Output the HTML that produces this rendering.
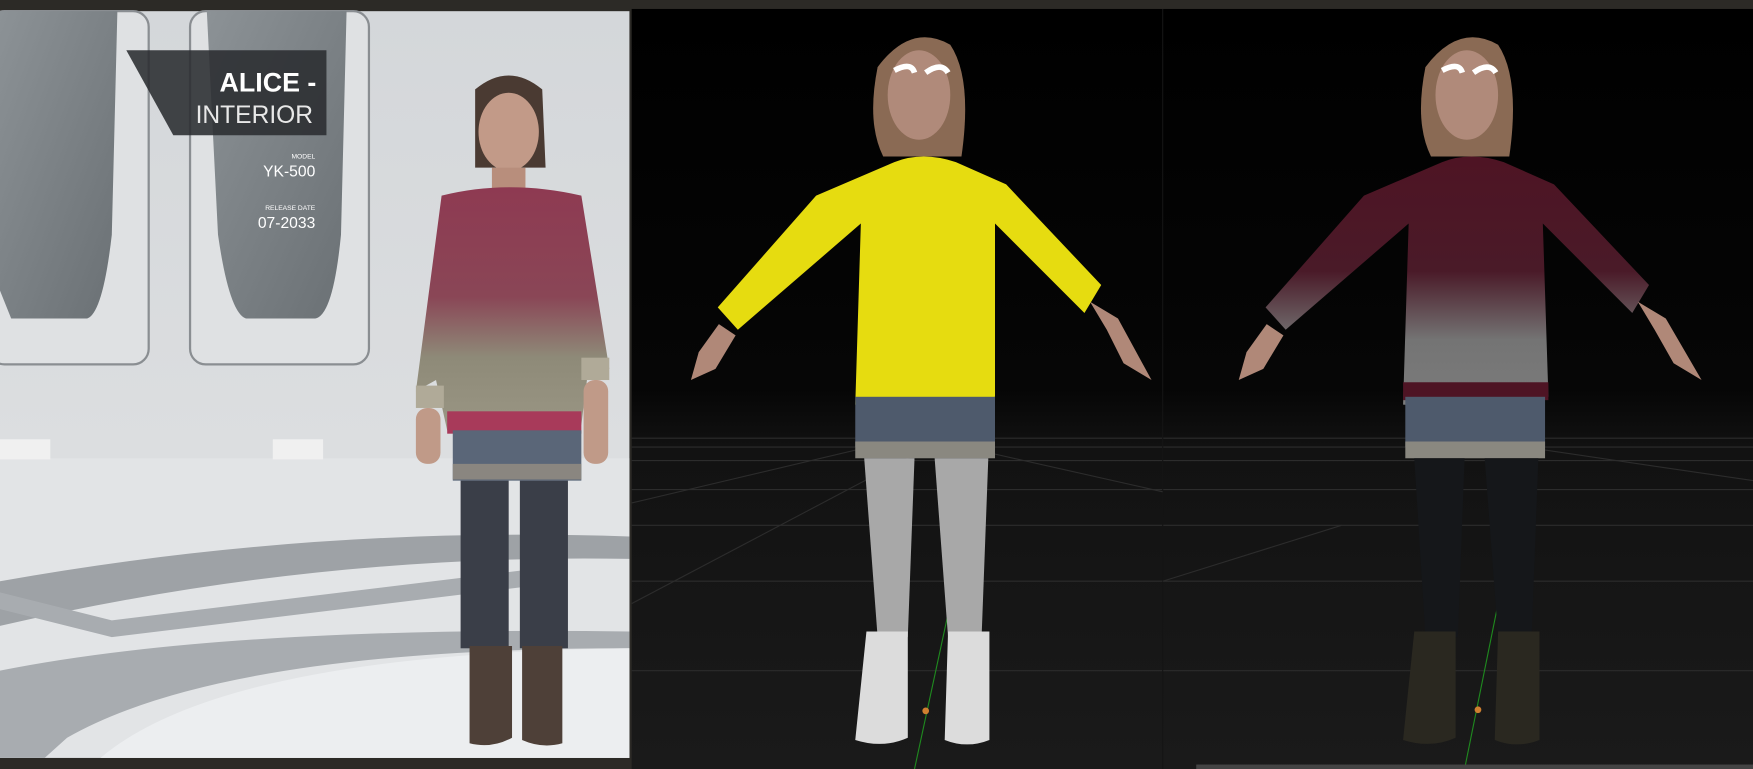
<!DOCTYPE html>
<html><head><meta charset="utf-8"><style>
html,body{margin:0;padding:0;width:1753px;height:769px;overflow:hidden;background:#2c2a26}
svg{display:block}
</style></head><body>
<svg width="1753" height="769" viewBox="0 0 1568 688" preserveAspectRatio="none" xmlns="http://www.w3.org/2000/svg">
<defs>
<linearGradient id="wall" x1="0" y1="0" x2="0" y2="1"><stop offset="0" stop-color="#d4d7da"/><stop offset="0.6" stop-color="#dcdee0"/><stop offset="1" stop-color="#e4e6e8"/></linearGradient>
<linearGradient id="win" x1="0" y1="0" x2="1" y2="1"><stop offset="0" stop-color="#8c9296"/><stop offset="1" stop-color="#6a7074"/></linearGradient>
<linearGradient id="jk" x1="0" y1="0" x2="0" y2="1"><stop offset="0" stop-color="#8e3a52"/><stop offset="0.45" stop-color="#8a4656"/><stop offset="0.7" stop-color="#8e8a78"/><stop offset="1" stop-color="#9a9684"/></linearGradient>
<linearGradient id="jk2" x1="0" y1="0" x2="0" y2="1"><stop offset="0" stop-color="#4e1424"/><stop offset="0.45" stop-color="#4a1a28"/><stop offset="0.72" stop-color="#747474"/><stop offset="1" stop-color="#7c7c7c"/></linearGradient>
<linearGradient id="vp" x1="0" y1="0" x2="0" y2="1"><stop offset="0" stop-color="#000"/><stop offset="0.5" stop-color="#060606"/><stop offset="0.58" stop-color="#121212"/><stop offset="1" stop-color="#1a1a1a"/></linearGradient>
</defs>
<rect width="1568" height="688" fill="#2c2a26"/>
<!-- left panel -->
<rect x="0" y="10" width="563" height="668" fill="url(#wall)"/>
<rect x="0" y="410" width="563" height="268" fill="#e2e4e6"/>
<rect x="-10" y="10" width="143" height="316" rx="14" fill="#dfe1e3" stroke="#8a8e92" stroke-width="2"/>
<path d="M0 10 H105 L100 210 Q92 280 78 285 H10 L0 260Z" fill="url(#win)"/>
<rect x="170" y="10" width="160" height="316" rx="14" fill="#dfe1e3" stroke="#8a8e92" stroke-width="2"/>
<path d="M185 10 H310 L305 210 Q298 282 282 285 H220 Q205 280 195 210Z" fill="url(#win)"/>
<rect x="0" y="393" width="45" height="18" fill="#f0f0f0"/>
<rect x="244" y="393" width="45" height="18" fill="#f0f0f0"/>
<path d="M0 520 Q280 470 563 480 V500 Q280 495 0 560Z" fill="#9ea2a6"/>
<path d="M0 545 L100 570 L470 525 V510 L100 555 L0 530Z" fill="#a8acb0"/>
<path d="M0 600 Q200 560 563 565 V580 Q200 580 60 660 L40 678 H0Z" fill="#a8acb0"/>
<path d="M90 678 Q200 585 563 580 V678Z" fill="#eceef0"/>
<!-- label -->
<path d="M113 45 H292 V121 H155Z" fill="#2a2c30" opacity="0.88"/>
<text x="283" y="82" font-family="Liberation Sans, sans-serif" font-size="24" fill="#fff" text-anchor="end" font-weight="bold">ALICE -</text>
<text x="280" y="110" font-family="Liberation Sans, sans-serif" font-size="22" fill="#e8e8e8" text-anchor="end">INTERIOR</text>
<text x="282" y="142" font-family="Liberation Sans, sans-serif" font-size="6" fill="#fff" text-anchor="end">MODEL</text>
<text x="282" y="158" font-family="Liberation Sans, sans-serif" font-size="14" fill="#fff" text-anchor="end">YK-500</text>
<text x="282" y="188" font-family="Liberation Sans, sans-serif" font-size="6" fill="#fff" text-anchor="end">RELEASE DATE</text>
<text x="282" y="204" font-family="Liberation Sans, sans-serif" font-size="14" fill="#fff" text-anchor="end">07-2033</text>
<!-- left figure -->
<path d="M425 80 Q455 55 485 80 L488 150 L425 150Z" fill="#4a3a32"/>
<ellipse cx="455" cy="118" rx="27" ry="35" fill="#c29a88"/>
<rect x="440" y="150" width="30" height="25" fill="#b88e7c"/>
<path d="M395 175 Q455 160 520 175 L545 330 L525 340 L520 380 L400 385 L390 340 L372 350 Z" fill="url(#jk)"/>
<rect x="372" y="345" width="25" height="20" fill="#b0aa98"/>
<rect x="520" y="320" width="25" height="20" fill="#b0aa98"/>
<rect x="372" y="365" width="22" height="50" rx="10" fill="#c09a88"/>
<rect x="522" y="340" width="22" height="75" rx="10" fill="#c09a88"/>
<rect x="400" y="368" width="120" height="20" fill="#a83a5a"/>
<rect x="405" y="385" width="115" height="45" fill="#5a6678"/>
<rect x="405" y="415" width="115" height="14" fill="#8a8680"/>
<rect x="412" y="430" width="43" height="150" fill="#3a3e48"/>
<rect x="465" y="430" width="43" height="150" fill="#3a3e48"/>
<path d="M420 578 H458 V660 Q440 670 420 665Z" fill="#4e4038"/>
<path d="M467 578 H503 V665 Q485 670 467 662Z" fill="#4e4038"/>
<!-- viewport -->
<rect x="565" y="8" width="1003" height="680" fill="url(#vp)"/>
<g stroke="#2c2c2c" stroke-width="1" fill="none">
<line x1="565" y1="392" x2="1568" y2="392"/><line x1="565" y1="400" x2="1568" y2="400"/>
<line x1="565" y1="412" x2="1568" y2="412"/><line x1="565" y1="438" x2="1568" y2="438"/>
<line x1="565" y1="470" x2="1568" y2="470"/><line x1="565" y1="520" x2="1568" y2="520"/>
<line x1="565" y1="600" x2="1568" y2="600"/>
<line x1="565" y1="450" x2="840" y2="385"/><line x1="565" y1="540" x2="840" y2="395"/>
<line x1="1040" y1="8" x2="1040" y2="688" stroke="#151515"/>
<line x1="840" y1="395" x2="1040" y2="440"/><line x1="1040" y1="520" x2="1200" y2="470"/>
<line x1="1330" y1="395" x2="1568" y2="430"/>
</g>
<line x1="850" y1="540" x2="818" y2="688" stroke="#1f8a1f"/>
<line x1="1340" y1="540" x2="1310" y2="688" stroke="#1f8a1f"/>
<circle cx="828" cy="636" r="3" fill="#d08030"/>
<circle cx="1322" cy="635" r="3" fill="#d08030"/>
<rect x="1070" y="684" width="498" height="4" fill="#444"/>
<!-- yellow figure -->
<path d="M785 60 Q815 20 850 40 Q870 70 860 140 L790 140 Q775 110 785 60Z" fill="#8a6a54"/>
<ellipse cx="822" cy="85" rx="28" ry="40" fill="#b08a7a"/>
<path d="M800 63 Q815 55 818 65 M828 65 Q842 55 848 65" stroke="#fff" stroke-width="5" fill="none"/>
<path d="M800 145 Q825 135 855 145 L900 165 L985 255 L970 280 L890 200 L890 355 L845 368 L765 362 L770 200 L660 295 L642 275 L730 175Z" fill="#e6dc10"/>
<path d="M643 290 L625 315 L618 340 L640 330 L658 300Z" fill="#b08878"/>
<path d="M975 270 L1000 285 L1030 340 L1005 325 L990 295Z" fill="#b08878"/>
<rect x="765" y="355" width="125" height="45" fill="#4e5a6c"/>
<rect x="765" y="395" width="125" height="15" fill="#8a8880"/>
<path d="M773 410 H818 L812 570 H785Z" fill="#a8a8a8"/>
<path d="M836 410 H884 L878 570 H848Z" fill="#a8a8a8"/>
<path d="M775 565 H812 V660 Q790 670 765 662Z" fill="#dcdcdc"/>
<path d="M848 565 H885 V662 Q865 670 845 662Z" fill="#dcdcdc"/>
<!-- maroon figure -->
<path d="M1275 60 Q1305 20 1340 40 Q1360 70 1350 140 L1280 140 Q1265 110 1275 60Z" fill="#8a6a54"/>
<ellipse cx="1312" cy="85" rx="28" ry="40" fill="#b08a7a"/>
<path d="M1290 63 Q1305 55 1308 65 M1318 65 Q1332 55 1338 65" stroke="#fff" stroke-width="5" fill="none"/>
<path d="M1290 145 Q1315 135 1345 145 L1390 165 L1475 255 L1460 280 L1380 200 L1385 355 L1335 368 L1255 362 L1260 200 L1150 295 L1132 275 L1220 175Z" fill="url(#jk2)"/>
<rect x="1255" y="342" width="130" height="16" fill="#4e1424"/>
<path d="M1133 290 L1115 315 L1108 340 L1130 330 L1148 300Z" fill="#b08878"/>
<path d="M1465 270 L1490 285 L1522 340 L1497 325 L1480 295Z" fill="#b08878"/>
<rect x="1257" y="355" width="125" height="45" fill="#4e5a6c"/>
<rect x="1257" y="395" width="125" height="15" fill="#8a8880"/>
<path d="M1265 410 H1310 L1304 570 H1275Z" fill="#15171a"/>
<path d="M1328 410 H1376 L1370 570 H1340Z" fill="#15171a"/>
<path d="M1265 565 H1302 V660 Q1280 670 1255 662Z" fill="#2a2820"/>
<path d="M1340 565 H1377 V662 Q1357 670 1337 662Z" fill="#2a2820"/>
</svg>
</body></html>
